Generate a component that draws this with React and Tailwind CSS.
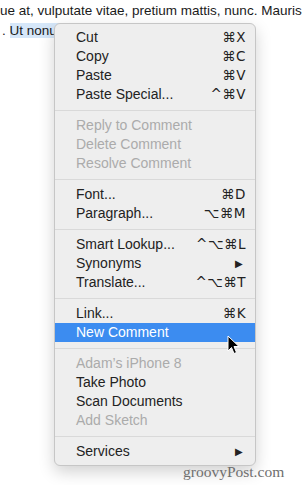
import React from 'react';

const items = [
  { label: 'Cut', key: '⌘X' },
  { label: 'Copy', key: '⌘C' },
  { label: 'Paste', key: '⌘V' },
  { label: 'Paste Special...', key: '^⌘V' },
  'sep',
  { label: 'Reply to Comment', disabled: true },
  { label: 'Delete Comment', disabled: true },
  { label: 'Resolve Comment', disabled: true },
  'sep',
  { label: 'Font...', key: '⌘D' },
  { label: 'Paragraph...', key: '⌥⌘M' },
  'sep',
  { label: 'Smart Lookup...', key: '^⌥⌘L' },
  { label: 'Synonyms', sub: true },
  { label: 'Translate...', key: '^⌥⌘T' },
  'sep',
  { label: 'Link...', key: '⌘K' },
  { label: 'New Comment', active: true },
  'sep',
  { label: 'Adam’s iPhone 8', disabled: true },
  { label: 'Take Photo' },
  { label: 'Scan Documents' },
  { label: 'Add Sketch', disabled: true },
  'sep',
  { label: 'Services', sub: true },
];

function MenuRow({ item }) {
  const color = item.active ? 'bg-[#3c8cf0] text-white' : item.disabled ? 'text-[#ababab]' : 'text-[#222]';
  return (
    <div className={`flex h-[19px] items-center justify-between pl-[21px] pr-[9px] ${color}`}>
      <span>{item.label}</span>
      {item.key && (
        <span className="font-['DejaVu_Sans',sans-serif] text-[13.5px] tracking-[0.5px]">{item.key}</span>
      )}
      {item.sub && <span className="mr-[3px] text-[10px]">▶</span>}
    </div>
  );
}

export default function App() {
  return (
    <div className="relative h-[485px] w-[308px] overflow-hidden bg-white font-['Liberation_Sans',Arial,sans-serif] text-[14px]">
      {/* document text behind the menu */}
      <div className="whitespace-nowrap pt-px text-[#1a1a1a] leading-[20px] text-[13.5px]">
        <p>ue at, vulputate vitae, pretium mattis, nunc. Mauris</p>
        <p className="pl-[2px]">. <span className="bg-[#d6e7f9] pr-4">Ut nonummy</span></p>
      </div>

      {/* context menu */}
      <div className="absolute left-[54px] top-[23px] w-[202px] rounded-[6px] border border-[#c6c6c6] bg-[#eeeeee] py-[4px] shadow-[0_6px_16px_rgba(0,0,0,0.18)]">
        {items.map((item, i) =>
          item === 'sep' ? (
            <div key={i} className="flex h-[12px] items-center">
              <div className="h-px w-full bg-[#d9d9d9]" />
            </div>
          ) : (
            <MenuRow key={i} item={item} />
          )
        )}
      </div>

      {/* mouse pointer */}
      <svg className="absolute left-[227px] top-[335px]" width="13" height="20" viewBox="0 0 13 20">
        <path d="M1 1 L1 16 L4.5 12.5 L7 18.5 L9.5 17.5 L7 11.5 L12 11.5 Z" fill="#000" stroke="#fff" strokeWidth="1" strokeLinejoin="round" />
      </svg>

      <div className="absolute left-[183px] top-[460px] font-['Liberation_Serif',serif] text-[15.5px] text-[#6f6f6f]">
        groovyPost.com
      </div>
    </div>
  );
}
